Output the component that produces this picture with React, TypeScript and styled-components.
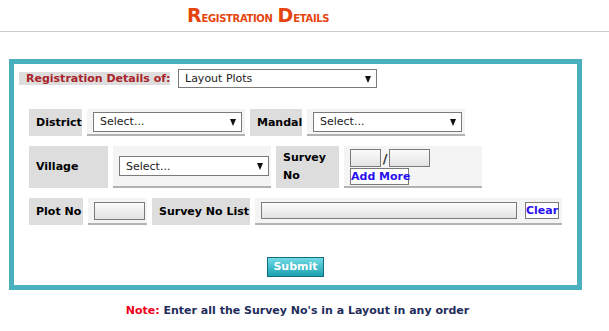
import React from "react";
import styled, { createGlobalStyle } from "styled-components";

const GlobalStyle = createGlobalStyle`
  html, body { margin: 0; padding: 0; background: #fff; }
  body { font-family: "DejaVu Sans", Verdana, sans-serif; font-size: 11px; color: #000; }
  * { box-sizing: border-box; }
`;

const Page = styled.div`
  width: 609px;
  height: 331px;
  overflow: hidden;
`;

const Header = styled.div`
  height: 32px;
  border-bottom: 1px solid #cccccc;
  display: flex;
  justify-content: center;
  padding-right: 93px;
  padding-top: 5px;
`;

const Title = styled.h1`
  margin: 0;
  font-weight: bold;
  color: #e5440e;
  font-size: 10px;
  line-height: 20px;
  letter-spacing: -0.35px;
  display: flex;
  align-items: baseline;
`;

const Big = styled.span<{ $space?: boolean }>`
  font-size: 19px;
  letter-spacing: 0;
  margin-left: ${(p) => (p.$space ? "5px" : "0")};
`;

const Panel = styled.div`
  margin: 27px 0 0 9px;
  width: 573px;
  height: 231px;
  border: 5px solid #4bb0be;
  padding: 5px 0 0 5px;
  display: flex;
  flex-direction: column;
`;

const TopRow = styled.div`
  display: flex;
  align-items: center;
  gap: 8px;
  height: 19px;
`;

const OfLabel = styled.span`
  background: #dddddd;
  color: #a8242a;
  font-weight: bold;
  font-size: 11px;
  line-height: 13px;
  padding: 0 2px 0 7px;
  width: 151px;
  white-space: nowrap;
`;

const Row = styled.div<{ $top: number; $h: number }>`
  display: flex;
  gap: 5px;
  margin-left: 10px;
  margin-top: ${(p) => p.$top}px;
  height: ${(p) => p.$h}px;
`;

const Label = styled.div<{ $w: number }>`
  width: ${(p) => p.$w}px;
  background: #dddddd;
  font-weight: bold;
  font-size: 11px;
  line-height: 18px;
  padding: 0 0 0 7px;
  display: flex;
  align-items: center;
  white-space: nowrap;
  flex-shrink: 0;
`;

const Cell = styled.div<{ $w: number; $col?: boolean }>`
  width: ${(p) => p.$w}px;
  background: #f4f4f4;
  border-bottom: 2px solid #b3b3b3;
  padding-left: 6px;
  display: flex;
  flex-direction: ${(p) => (p.$col ? "column" : "row")};
  align-items: ${(p) => (p.$col ? "flex-start" : "center")};
  padding-top: ${(p) => (p.$col ? "3px" : "0")};
  gap: ${(p) => (p.$col ? "1px" : "8px")};
  flex-shrink: 0;
`;

const SelectWrap = styled.div<{ $w: number; $h?: number }>`
  position: relative;
  width: ${(p) => p.$w}px;
  height: ${(p) => p.$h ?? 20}px;
`;

const NativeSelect = styled.select`
  appearance: none;
  -webkit-appearance: none;
  width: 100%;
  height: 100%;
  border: 1px solid #7a7a7a;
  border-radius: 0;
  background: #fff;
  font-family: "DejaVu Sans", Verdana, sans-serif;
  font-size: 11px;
  color: #222;
  padding: 0 0 0 6px;
  margin: 0;
  outline: none;
`;

const Arrow = styled.span`
  position: absolute;
  right: 6px;
  top: 50%;
  margin-top: -3px;
  width: 0;
  height: 0;
  border-left: 3.5px solid transparent;
  border-right: 3.5px solid transparent;
  border-top: 7px solid #111;
  pointer-events: none;
`;

const TextBox = styled.input<{ $w: number; $h?: number }>`
  width: ${(p) => p.$w}px;
  height: ${(p) => p.$h ?? 18}px;
  border: 1px solid #7a7a7a;
  border-radius: 0;
  background: linear-gradient(#fbfbfb, #e3e3e3);
  margin: 0;
  padding: 0 2px;
  font-family: "DejaVu Sans", Verdana, sans-serif;
  font-size: 11px;
  outline: none;
`;

const Pair = styled.div`
  display: flex;
  align-items: center;
`;

const Slash = styled.span`
  width: 8px;
  text-align: center;
  font-size: 13px;
  font-weight: bold;
  color: #333;
`;

const SmallButton = styled.button<{ $w: number }>`
  width: ${(p) => p.$w}px;
  height: 17px;
  border: 1px solid #7a7a7a;
  border-radius: 0;
  background: #fff;
  color: #2a10f0;
  font-family: "DejaVu Sans", Verdana, sans-serif;
  font-size: 11px;
  font-weight: bold;
  padding: 0;
  margin: 0;
  line-height: 15px;
  white-space: nowrap;
`;

const ButtonRow = styled.div`
  display: flex;
  justify-content: center;
  margin-top: 32px;
  padding-right: 5px;
`;

const Submit = styled.button`
  width: 57px;
  height: 20px;
  border: 1px solid #106d79;
  border-radius: 0;
  background: linear-gradient(#72dae6, #1aa1b0);
  color: #fff;
  font-family: "DejaVu Sans", Verdana, sans-serif;
  font-size: 11px;
  font-weight: bold;
  padding: 0;
  line-height: 18px;
`;

const Note = styled.p`
  margin: 14px 0 0 0;
  text-align: center;
  padding-right: 14px;
  font-weight: bold;
  font-size: 11px;
  color: #1f2d5c;
`;

const NoteLead = styled.span`
  color: #f0001a;
`;

function Select({ w, value, h }: { w: number; value: string; h?: number }) {
  return (
    <SelectWrap $w={w} $h={h}>
      <NativeSelect defaultValue={value}>
        <option>{value}</option>
      </NativeSelect>
      <Arrow />
    </SelectWrap>
  );
}

export default function App() {
  return (
    <Page>
      <GlobalStyle />
      <Header>
        <Title>
          <Big>R</Big>EGISTRATION<Big $space>D</Big>ETAILS
        </Title>
      </Header>
      <Panel>
        <TopRow>
          <OfLabel>Registration Details of:</OfLabel>
          <Select w={199} h={19} value="Layout Plots" />
        </TopRow>

        <Row $top={21} $h={27}>
          <Label $w={53}>District</Label>
          <Cell $w={158}>
            <Select w={149} value="Select..." />
          </Cell>
          <Label $w={52}>Mandal</Label>
          <Cell $w={158}>
            <Select w={149} value="Select..." />
          </Cell>
        </Row>

        <Row $top={10} $h={42}>
          <Label $w={79}>Village</Label>
          <Cell $w={158}>
            <Select w={150} value="Select..." />
          </Cell>
          <Label $w={63}>
            Survey
            <br />
            No
          </Label>
          <Cell $w={138} $col>
            <Pair>
              <TextBox $w={31} />
              <Slash>/</Slash>
              <TextBox $w={41} />
            </Pair>
            <SmallButton $w={59}>Add More</SmallButton>
          </Cell>
        </Row>

        <Row $top={10} $h={27}>
          <Label $w={54}>Plot No</Label>
          <Cell $w={59}>
            <TextBox $w={51} />
          </Cell>
          <Label $w={98}>Survey No List</Label>
          <Cell $w={307}>
            <TextBox $w={256} $h={17} />
            <SmallButton $w={34}>Clear</SmallButton>
          </Cell>
        </Row>

        <ButtonRow>
          <Submit>Submit</Submit>
        </ButtonRow>
      </Panel>
      <Note>
        <NoteLead>Note:</NoteLead> Enter all the Survey No's in a Layout in any order
      </Note>
    </Page>
  );
}
